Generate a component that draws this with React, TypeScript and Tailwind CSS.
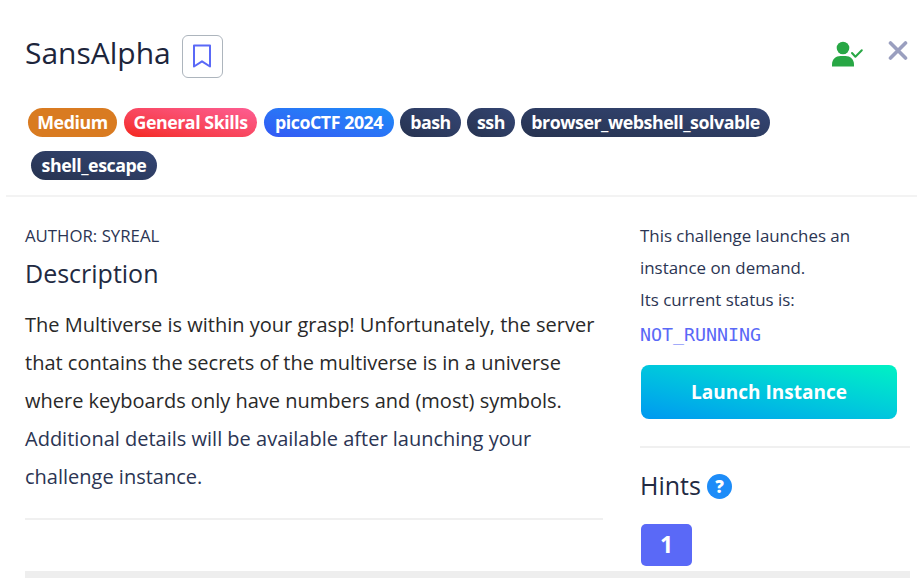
const darkTag = "bg-linear-to-tr from-[#273350] to-[#344675]";

const tags = [
    { text: "Medium", style: "w-[89px] bg-[#d97b21]" },
    { text: "General Skills", style: "w-[133px] ml-[7px] bg-linear-to-tr from-[#f42618] to-[#fd5d93]" },
    { text: "picoCTF 2024", style: "w-[130px] ml-[7px] bg-linear-to-tr from-[#3358f4] to-[#1d8cf8]" },
    { text: "bash", style: "w-[61px] ml-[6px] " + darkTag },
    { text: "ssh", style: "w-[48px] ml-[6px] " + darkTag },
    { text: "browser_webshell_solvable", style: "w-[249px] ml-[6px] " + darkTag },
    { text: "shell_escape", style: "w-[126px] ml-[3px] " + darkTag },
];

export default function App() {
    return (
        <div className="w-[917px] h-[578px] overflow-hidden bg-white font-['Open_Sans',sans-serif] text-[#2b3553]">
            {/* Header */}
            <header className="ml-1.5 h-[197px] border-b-2 border-[#f3f3f3] pl-[19px]">
                <div className="flex justify-between pt-[34px] h-[108px]">
                    <div className="flex items-start">
                        <h1 className="w-[157px] text-[30px] leading-[38px] text-[#1d253b] whitespace-nowrap">SansAlpha</h1>
                        <button className="mt-px w-[41px] h-[43px] rounded-md border border-[#adb5bd] pb-0.5 flex items-center justify-center">
                            <BookmarkIcon />
                        </button>
                    </div>
                    <div className="flex items-start pr-[9px]">
                        <UserCheckIcon />
                        <CloseIcon />
                    </div>
                </div>
                <div className="flex flex-wrap gap-y-[14px] pl-[3px] w-[800px]">
                    {tags.map((tag) => <Tag key={tag.text} {...tag} />)}
                </div>
            </header>

            <div className="flex pl-[25px]">
                {/* Description */}
                <main className="w-[578px] pt-[27px]">
                    <p className="text-[16.8px] leading-6">AUTHOR: SYREAL</p>
                    <h2 className="mt-2 text-[25px] leading-[34px] text-[#222a42]">Description</h2>
                    <p className="mt-4 text-[20px] leading-[38px] text-[#292929] whitespace-nowrap">
                        The Multiverse is within your grasp! Unfortunately, the server<br />
                        that contains the secrets of the multiverse is in a universe<br />
                        where keyboards only have numbers and (most) symbols.
                    </p>
                    <p className="text-[20px] leading-[38px] whitespace-nowrap">
                        Additional details will be available after launching your<br />
                        challenge instance.
                    </p>
                    <hr className="mt-[22px] border-t-2 border-[#f0f0f0]" />
                </main>

                {/* Instance */}
                <aside className="ml-[37px] w-[270px] pt-[23px]">
                    <p className="text-[16.9px] leading-8 whitespace-nowrap">
                        This challenge launches an<br />
                        instance on demand.<br />
                        Its current status is:
                    </p>
                    <code className="block mt-0.5 h-[33px] font-['DejaVu_Sans_Mono',monospace] text-[18.3px] leading-[33px] text-[#5a69f7]">NOT_RUNNING</code>
                    <button className="block ml-px mt-[14px] w-[256px] h-[54px] rounded-lg bg-linear-to-tr from-[#0098f0] to-[#00f2c3] text-[19px] font-bold text-white">
                        Launch Instance
                    </button>
                    <hr className="mt-[27px] border-t-2 border-[#f0f0f0]" />
                    <div className="flex items-center mt-5 h-9">
                        <h2 className="w-[67px] text-[25px] text-[#222a42]">Hints</h2>
                        <HelpIcon />
                    </div>
                    <button className="block ml-px mt-5 w-[51px] h-[42px] rounded-[5px] bg-[#5a69f7] pb-0.5 text-[23px] leading-10 font-bold text-white">1</button>
                </aside>
            </div>
            <div className="ml-[25px] mt-[5px] w-[885px] h-2 bg-[#eeeeee]" />
        </div>
    )
}

function Tag({ text, style }: { text: string; style: string }) {
    return (
        <span className={`h-[29px] rounded-full pb-px flex items-center justify-center text-[17.8px] leading-[18px] font-bold tracking-[-0.45px] text-white whitespace-nowrap ${style}`}>
            {text}
        </span>
    )
}

function BookmarkIcon() {
    return (
        <svg className="mr-px" width="18" height="24" viewBox="0 0 18 24" fill="none" stroke="#5a69f7" strokeWidth="2" strokeLinejoin="round">
            <path d="M1 1.500h16v21l-8-5.200L1 22.500z" />
        </svg>
    )
}

function UserCheckIcon() {
    return (
        <svg className="mt-[7px] mr-6" width="32" height="27" viewBox="0 0 32 27" fill="#28a745">
            <circle cx="11" cy="7" r="6.3" />
            <path d="M0 25.500v-2c0-5.300 3.800-8.500 8.500-8.500h5c4.700 0 8.500 3.200 8.500 8.500v2z" />
            <path d="m20 12 3.400 3.700 6.400-6.500" fill="none" stroke="#28a745" strokeWidth="2" strokeLinecap="round" strokeLinejoin="round" />
        </svg>
    )
}

function CloseIcon() {
    return (
        <svg className="mt-[7px]" width="20" height="20" viewBox="0 0 20 20" stroke="#9a9fbf" strokeWidth="3.6" strokeLinecap="round">
            <path d="m2.500 2 15 15M17.500 2l-15 15" />
        </svg>
    )
}

function HelpIcon() {
    return (
        <span className="w-[25px] h-[25px] rounded-full bg-[#1d8cf8] flex items-center justify-center text-white text-[17px] leading-none font-extrabold">?</span>
    )
}
